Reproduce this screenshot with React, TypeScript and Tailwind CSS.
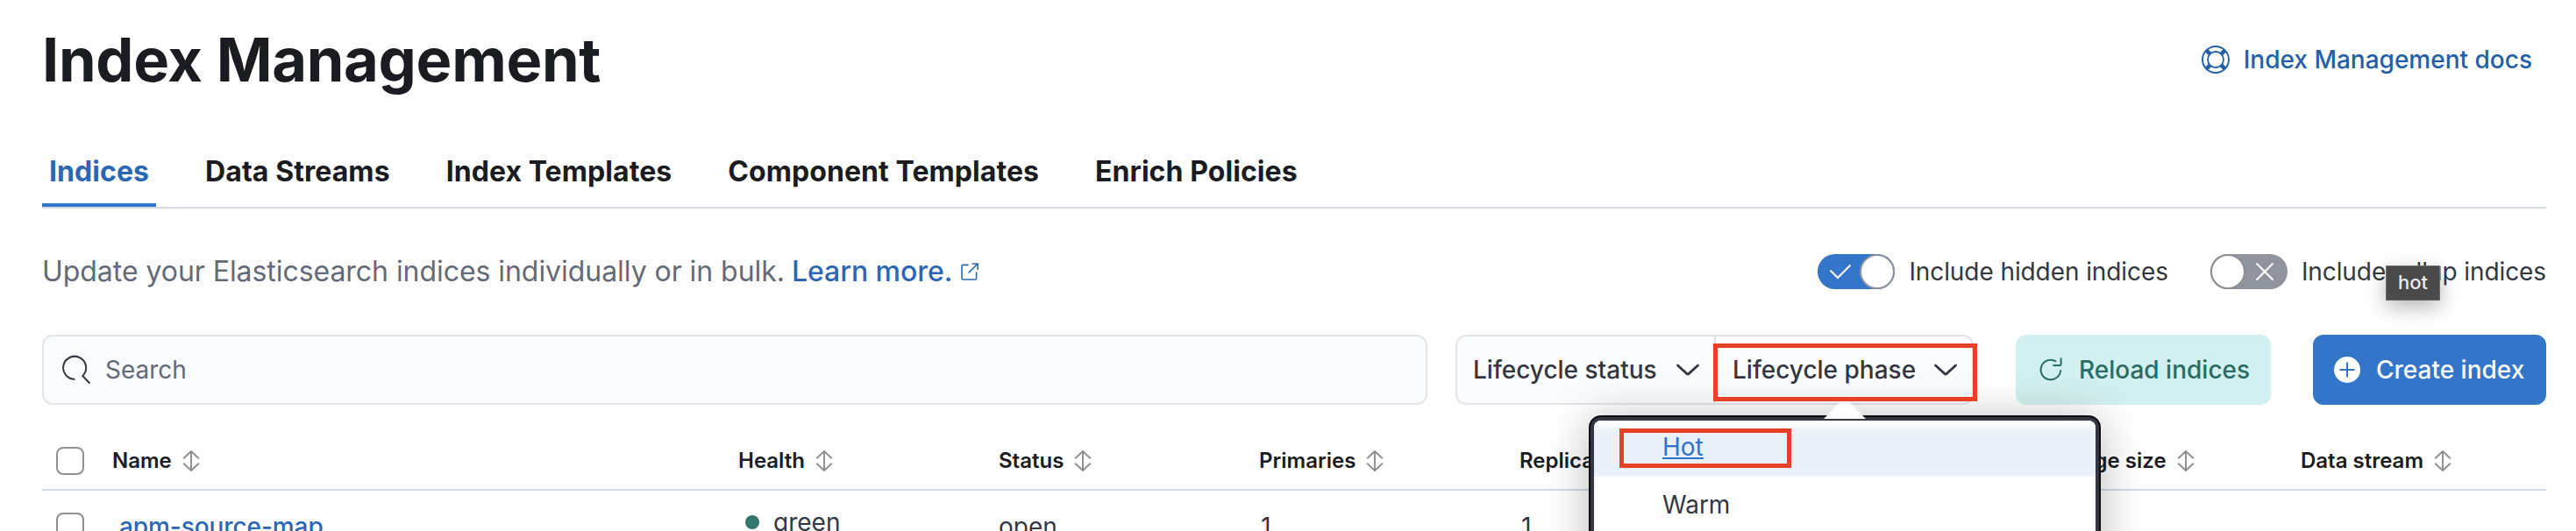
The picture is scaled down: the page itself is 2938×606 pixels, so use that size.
import React from 'react';

const tabs = ['Indices', 'Data Streams', 'Index Templates', 'Component Templates', 'Enrich Policies'];

const columns = [
  'Name',
  'Health',
  'Status',
  'Primaries',
  'Replicas',
  'Docs count',
  'Storage size',
  'Data stream',
];

const HelpIcon = () => (
  <svg className="w-8 h-8" viewBox="0 0 32 32" fill="none" stroke="currentColor">
    <circle cx="16" cy="16" r="15" strokeWidth="2" />
    <circle cx="16" cy="16" r="9" strokeWidth="1.8" />
    <path d="M9.6 9.6 5.6 5.6M22.4 9.6l4-4M9.6 22.4l-4 4M22.4 22.4l4 4" strokeWidth="4.6" />
  </svg>
);

const ExternalIcon = () => (
  <svg className="w-[22px] h-[22px]" viewBox="0 0 22 22" fill="none" stroke="currentColor" strokeWidth="1.6">
    <path d="M9.6 3.4H3.4a1.4 1.4 0 0 0-1.4 1.4v13.8a1.4 1.4 0 0 0 1.4 1.4h13.8a1.4 1.4 0 0 0 1.4-1.4V11.6" />
    <path d="M9.6 12.4 20 2M13.6 2h6.6v7" />
  </svg>
);

const SearchIcon = () => (
  <svg className="w-[34px] h-[34px]" viewBox="0 0 34 34" fill="none" stroke="currentColor" strokeWidth="2">
    <path d="M16.5 27.7A13 13 0 1 1 25.3 23.9L33.4 32.6" />
  </svg>
);

const ChevronIcon = () => (
  <svg className="w-7 h-7" viewBox="0 0 28 28" fill="none" stroke="currentColor" strokeWidth="2.8">
    <path d="M2.5 9 13 18.6a1.6 1.6 0 0 0 2 0L25.5 9" strokeLinecap="round" />
  </svg>
);

const RefreshIcon = () => (
  <svg className="w-8 h-8" viewBox="0 0 32 32" fill="none" stroke="currentColor" strokeWidth="2">
    <path d="M27.2 16.2A11.3 11.3 0 1 1 22.2 6.6" />
    <path d="M27.6 2.4v7.4a1.2 1.2 0 0 1-1.2 1.2H18.4" />
  </svg>
);

const PlusIcon = () => (
  <svg className="w-[30px] h-[30px]" viewBox="0 0 30 30">
    <circle cx="15" cy="15" r="15" fill="#fff" />
    <path d="M15 6.5v17M6.5 15h17" stroke="#3375c9" strokeWidth="2" />
  </svg>
);

const SortIcon = () => (
  <svg className="w-[20px] h-6" viewBox="0 0 20 24" fill="none" stroke="#8e8e8e" strokeWidth="1.9">
    <path d="M10 1v22M1.2 9.2 10 1l8.8 8.2M1.2 14.8 10 23l8.8-8.2" />
  </svg>
);

const Checkbox = () => <div className="w-8 h-8 rounded-[8px] border-2 border-[#919191] bg-white" />;

function Switch({ on, label }: { on: boolean; label: string }) {
  return (
    <div className="flex items-center gap-4">
      <div className={`flex h-10 w-[88px] rounded-full ${on ? 'bg-[#3375c9]' : 'bg-[#8f949e]'}`}>
        {on ? (
          <>
            <svg className="h-10 w-12" viewBox="0 0 48 40" fill="none" stroke="#fff" strokeWidth="2">
              <path d="M14.5 18.5 23 27 37.5 12.5" />
            </svg>
            <div className="h-10 w-10 rounded-full border-2 border-[#8e9299] bg-white" />
          </>
        ) : (
          <>
            <div className="h-10 w-10 rounded-full border-2 border-[#8e8e8e] bg-white" />
            <svg className="h-10 w-12" viewBox="0 0 48 40" fill="none" stroke="#fff" strokeWidth="2">
              <path d="M12.5 10.5 31.5 29.5M31.5 10.5 12.5 29.5" />
            </svg>
          </>
        )}
      </div>
      <span className="text-[28px] leading-10 tracking-[-0.09px] whitespace-nowrap">{label}</span>
    </div>
  );
}

function Popover() {
  return (
    <div className="absolute left-[1812px] top-[474px] h-[240px] w-[584px] rounded-[14px] border-2 border-[#0b0c0f] bg-[#343741] px-1 pt-1 shadow-[0_6px_50px_rgba(0,0,0,0.28)]">
      <div className="h-full rounded-t-[8px] bg-white">
        <div className="flex h-16 items-start rounded-t-[8px] border-b-2 border-[#eff3fa] bg-linear-to-b from-white to-[#e9f0f9] to-[16px] pl-[78px] pt-[9px]">
          <span className="border-b-2 border-[#3073c8] text-[28px] leading-[42px] h-[35px] text-[#3073c8]">Hot</span>
        </div>
        <div className="pl-[78px] pt-[12px] text-[28px] leading-10">Warm</div>
      </div>
      <svg className="absolute left-[266px] -top-[22px] h-6 w-12" viewBox="0 0 48 24">
        <path d="M24 0 48 24H0z" fill="#fff" />
      </svg>
    </div>
  );
}

function App() {
  return (
    <div className="relative h-[606px] w-[2938px] overflow-hidden bg-white pl-12 pr-[34px] font-['Inter',sans-serif] text-[#343741]">
      <header className="flex h-[136px] items-center justify-between pr-4">
        <h1 className="pt-[2px] text-[68.57px] font-bold leading-[80px] tracking-[-0.32px] text-[#1a1c21]">
          Index Management
        </h1>
        <div className="flex items-center gap-4 text-[28px] font-medium text-[#2460a7]">
          <HelpIcon />
          Index Management docs
        </div>
      </header>

      <nav className="flex h-[102px] gap-12 border-b-2 border-[#d3dae6]">
        {tabs.map((tab, i) => (
          <div
            key={tab}
            className={`px-2 pt-[40px] text-[32px] font-bold leading-[40px] tracking-[0.07px] ${
              i === 0 ? 'border-b-4 border-[#3375c9] text-[#2b67b5]' : 'text-[#1a1c21]'
            }`}
          >
            {tab}
          </div>
        ))}
      </nav>

      <div className="flex h-36 items-center justify-between">
        <div className="flex items-center text-[32px] tracking-[-0.05px] text-[#646a77]">
          <span>Update your Elasticsearch indices individually or in bulk.</span>
          <span className="ml-2 mr-[9px] font-medium text-[#2b67b5]">Learn more.</span>
          <span className="text-[#2b67b5]">
            <ExternalIcon />
          </span>
        </div>
        <div className="flex gap-12">
          <Switch on label="Include hidden indices" />
          <Switch on={false} label="Include rollup indices" />
        </div>
      </div>

      <div className="flex h-20 text-[28px]">
        <div className="flex w-[1580px] items-center gap-[17px] rounded-[12px] border-2 border-[#e3e5e9] bg-[#fafbfd] pl-[19px]">
          <SearchIcon />
          <span className="text-[#646a77]">Search</span>
        </div>
        <div className="ml-8 flex w-[591px] rounded-[12px] border-2 border-[#e3e5e9] bg-[#fafbfd] font-medium">
          <div className="flex w-[295px] items-center justify-between border-r-2 border-[#e0e2e6] pl-[18px] pr-4">
            Lifecycle status
            <ChevronIcon />
          </div>
          <div className="flex flex-1 items-center justify-between pl-[19px] pr-4">
            Lifecycle phase
            <ChevronIcon />
          </div>
        </div>
        <div className="ml-12 flex w-[291px] items-center gap-4 rounded-[12px] bg-[#d2f0ef] pl-6 font-medium text-[#2b6b63]">
          <RefreshIcon />
          Reload indices
        </div>
        <div className="ml-12 flex w-[266px] items-center gap-[18px] rounded-[12px] bg-[#3375c9] pl-6 font-medium text-white">
          <PlusIcon />
          Create index
        </div>
      </div>

      <div className="mt-7">
        <div className="grid h-[70px] grid-cols-[64px_714px_repeat(6,297px)_1fr] border-b-2 border-[#d3dae6]">
          <div className="pl-4 pt-5">
            <Checkbox />
          </div>
          {columns.map((col) => (
            <div key={col} className="flex h-[72px] items-center gap-3 pl-4 text-[24px] font-semibold text-[#1a1c21]">
              {col}
              <SortIcon />
            </div>
          ))}
        </div>
        <div className="grid h-20 grid-cols-[64px_714px_repeat(6,297px)_1fr] text-[28px] leading-10 tabular-nums">
          <div className="pl-4 pt-[25px]">
            <Checkbox />
          </div>
          <div className="pl-6 pt-[21px] font-medium normal-nums tracking-[-0.08px] text-[#2b67b5]">apm-source-map</div>
          <div className="flex h-10 items-center gap-4 pl-6 mt-4">
            <div className="h-4 w-4 rounded-full bg-[#34776f]" />
            green
          </div>
          <div className="pl-4 pt-[21px]">open</div>
          <div className="pl-4 pt-[21px]">1</div>
          <div className="pl-4 pt-[21px]">1</div>
          <div className="pl-4 pt-[21px]">0</div>
          <div className="pl-4 pt-[21px] normal-nums">248b</div>
          <div />
        </div>
      </div>

      <Popover />

      {/* annotation boxes */}
      <div className="absolute left-[1954px] top-[392px] h-[66px] w-[301px] border-[5px] border-[#ea4025]" />
      <div className="absolute left-[1847px] top-[489px] h-[45px] w-[196px] border-[5px] border-[#ea4025]" />

      <div className="absolute left-[2721px] top-[303px] flex h-10 w-[62px] items-center justify-center border border-[#6b6b6b] bg-[#4a4a4a] pb-[2px] text-[22px] font-medium text-[#ececec] shadow-[0_8px_22px_rgba(0,0,0,0.28)]">
        hot
      </div>
    </div>
  );
}

export default App;
